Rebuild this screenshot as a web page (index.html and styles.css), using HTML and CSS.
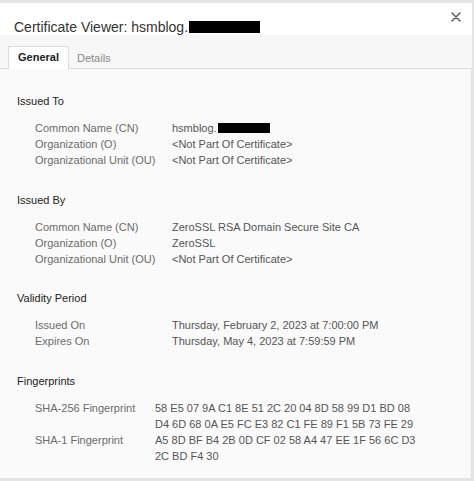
FILE: index.html
```html
<!DOCTYPE html>
<html lang="en">
<head>
    <meta charset="UTF-8">
    <meta name="viewport" content="width=device-width, initial-scale=1.0">
    <title>Certificate Viewer</title>
    <link rel="stylesheet" href="styles.css">
</head>
<body>
    <div class="dialog">
        <div class="dialog-header">
            <h1 class="dialog-title">Certificate Viewer: hsmblog.<span class="redacted"></span></h1>
            <button class="close-btn" aria-label="Close">
                <svg width="10" height="10" viewBox="0 0 10 10"><path d="M1 1 L9 9 M9 1 L1 9" stroke="#5f5f5f" stroke-width="1.6" stroke-linecap="round"/></svg>
            </button>
        </div>
        <div class="tabs">
            <div class="tab active">General</div>
            <div class="tab">Details</div>
        </div>
        <div class="content">
            <div class="section">
                <h2 class="section-title">Issued To</h2>
                <div class="rows">
                    <div class="row"><span class="label">Common Name (CN)</span><span class="value">hsmblog.<span class="redacted small"></span></span></div>
                    <div class="row"><span class="label">Organization (O)</span><span class="value">&lt;Not Part Of Certificate&gt;</span></div>
                    <div class="row"><span class="label">Organizational Unit (OU)</span><span class="value">&lt;Not Part Of Certificate&gt;</span></div>
                </div>
            </div>
            <div class="section">
                <h2 class="section-title">Issued By</h2>
                <div class="rows">
                    <div class="row"><span class="label">Common Name (CN)</span><span class="value">ZeroSSL RSA Domain Secure Site CA</span></div>
                    <div class="row"><span class="label">Organization (O)</span><span class="value">ZeroSSL</span></div>
                    <div class="row"><span class="label">Organizational Unit (OU)</span><span class="value">&lt;Not Part Of Certificate&gt;</span></div>
                </div>
            </div>
            <div class="section">
                <h2 class="section-title">Validity Period</h2>
                <div class="rows">
                    <div class="row"><span class="label">Issued On</span><span class="value">Thursday, February 2, 2023 at 7:00:00 PM</span></div>
                    <div class="row"><span class="label">Expires On</span><span class="value">Thursday, May 4, 2023 at 7:59:59 PM</span></div>
                </div>
            </div>
            <div class="section">
                <h2 class="section-title">Fingerprints</h2>
                <div class="rows">
                    <div class="row fp"><span class="label">SHA-256 Fingerprint</span><span class="value">58 E5 07 9A C1 8E 51 2C 20 04 8D 58 99 D1 BD 08 D4 6D 68 0A E5 FC E3 82 C1 FE 89 F1 5B 73 FE 29</span></div>
                    <div class="row fp"><span class="label">SHA-1 Fingerprint</span><span class="value">A5 8D BF B4 2B 0D CF 02 58 A4 47 EE 1F 56 6C D3 2C BD F4 30</span></div>
                </div>
            </div>
        </div>
    </div>
</body>
</html>
```

FILE: styles.css
```css
body {
    margin: 0;
    padding: 0;
    background: #e4e4e4;
    font-family: "Liberation Sans", Arial, sans-serif;
}

.dialog {
    margin-top: 3px;
    width: 472px;
    height: 475px;
    background: #fafafa;
    display: flex;
    flex-direction: column;
}

.dialog-header {
    flex: none;
    display: flex;
    justify-content: space-between;
    align-items: flex-start;
    background: #fff;
    height: 32px;
}

.dialog-title {
    margin: 16px 0 0 14px;
    font-size: 14px;
    font-weight: normal;
    color: #333;
    line-height: 16px;
    display: flex;
    align-items: center;
}

.redacted {
    display: inline-block;
    width: 71px;
    height: 12px;
    background: #000;
    margin-left: 1px;
}

.redacted.small {
    width: 52px;
    height: 10px;
    vertical-align: -1px;
}

.close-btn {
    border: none;
    background: none;
    padding: 0;
    margin: 7px 11px 0 0;
    cursor: pointer;
}

.tabs {
    flex: none;
    display: flex;
    align-items: flex-end;
    height: 33px;
    padding-left: 8px;
    background: #f7f7f7;
    border-bottom: 1px solid #dcdcdc;
}

.tab {
    font-size: 11px;
    line-height: 13px;
    color: #888;
    padding: 4px 9px 4px 7px;
    margin-bottom: -1px;
    border: 1px solid transparent;
    border-bottom: none;
}

.tab.active {
    background: #fff;
    color: #222;
    font-weight: bold;
    border-color: #dcdcdc;
    padding: 4px 9px 5px;
}

.content {
    flex: 1;
    min-height: 0;
    overflow: hidden;
    padding: 25px 0 0 17px;
    border-right: 1px solid #e2e2e2;
}

.section {
    margin-bottom: 24.5px;
}

.section-title {
    margin: 0 0 12px;
    font-size: 11px;
    font-weight: normal;
    color: #222;
    line-height: 14px;
}

.rows {
    padding-left: 18px;
}

.row {
    display: flex;
    font-size: 11px;
    line-height: 16px;
}

.label {
    width: 137px;
    flex: none;
    color: #6b6b6b;
}

.value {
    color: #555;
}

.row.fp .label {
    width: 120px;
}

.row.fp .value {
    width: 262px;
}
```
